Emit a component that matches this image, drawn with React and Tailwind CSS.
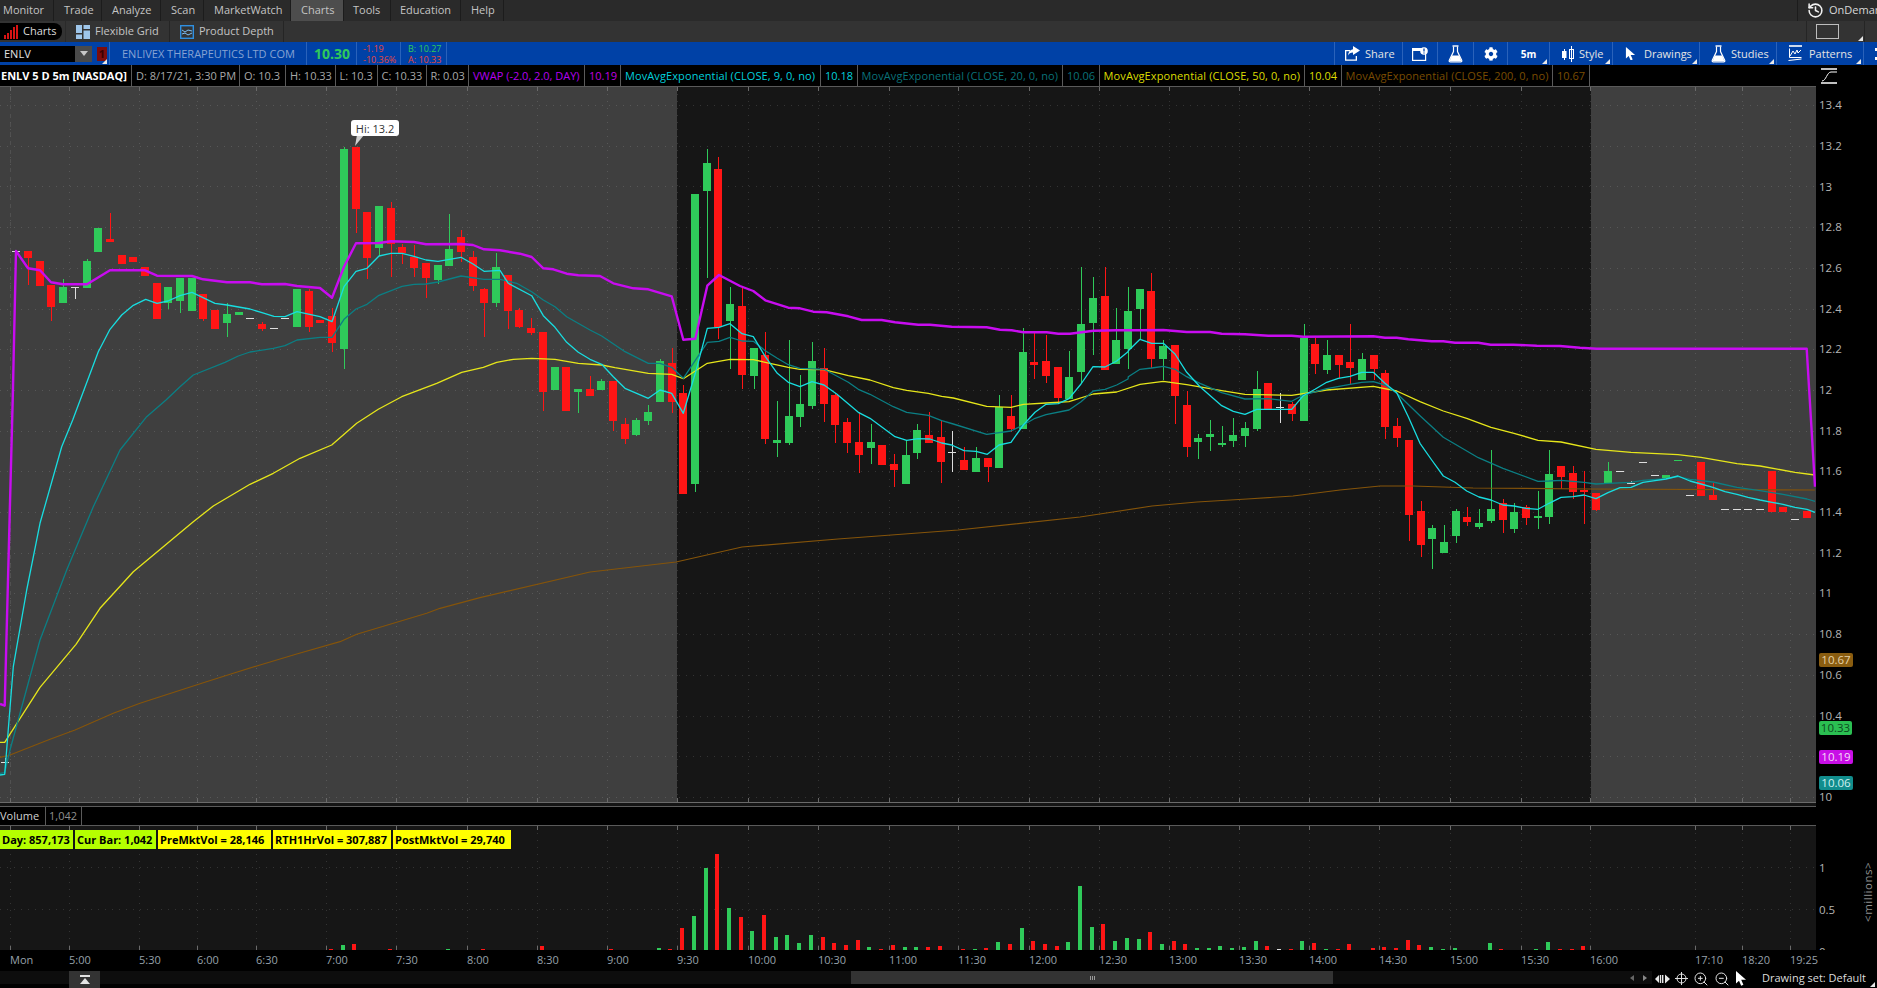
import React from "react";
import { FaCog } from "react-icons/fa";
import { History, ZoomIn, ZoomOut } from "lucide-react";

const G = "#2fca5a", R = "#ff1515", W = "#dddddd";

// candles: [colour, centre, bodyTop, bodyBottom, wickTop, wickBottom] measured on 3x crops
const region = (x0, y0, list) =>
  list.map(([c, cx, bt, bb, wt, wb]) => ({
    c,
    x: x0 + cx / 3,
    bt: y0 + bt / 3,
    bb: y0 + bb / 3,
    wt: wt == null ? null : y0 + wt / 3,
    wb: wb == null ? null : y0 + wb / 3,
  }));

const candles = [
  ...region(0, 400, [[W, 15, 1086, 1088, 1075, 1110]]),
  ...region(0, 120, [
    [W, 48, 393, 395], [R, 84, 393, 413, null, 496], [R, 120, 424, 497], [R, 153, 495, 560, null, 602],
    [G, 189, 501, 548, 478, null], [W, 225, 502, 504, null, 536], [G, 261, 423, 503, 417, null], [G, 294, 324, 396],
    [R, 330, 357, 366, 278, null], [R, 366, 406, 431], [R, 399, 411, 426], [R, 435, 441, 467], [R, 471, 489, 597],
    [G, 504, 501, 548, null, 566], [G, 540, 474, 543, null, 578], [G, 576, 474, 573], [R, 609, 522, 597, null, 602],
    [R, 645, 570, 627], [G, 681, 582, 609, 548, 650], [G, 717, 576, 585], [W, 750, 594, 596], [R, 786, 612, 627, 606, 632],
    [W, 822, 624, 626], [W, 855, 594, 596], [G, 891, 507, 621], [R, 927, 513, 621, 507, 637], [R, 960, 600, 609],
    [R, 996, 588, 669, 564, 695], [G, 1032, 87, 687, 81, 748], [R, 1068, 81, 267, null, 338], [R, 1101, 276, 413, null, 478],
    [G, 1137, 258, 384, null, 408], [R, 1173, 264, 372, 246, 472], [R, 1206, 381, 399, 372, 432], [R, 1242, 411, 444, 375, 472],
    [R, 1278, 429, 474, null, 535], [G, 1314, 435, 480, null, 492], [G, 1347, 387, 438, 283, null], [R, 1383, 351, 396, 331, 425],
    [R, 1419, 411, 498, 394, 514], [R, 1452, 507, 549, 503, 650], [G, 1488, 441, 549, 400, 560],
  ]),
  ...region(300, 120, [
    [R, 624, 465, 573, null, 626], [R, 657, 570, 621, 565, 625], [R, 693, 624, 639, 595, 645], [R, 729, 636, 816, null, 872],
    [G, 765, 741, 810], [R, 798, 741, 873], [G, 834, 807, 816, null, 878], [R, 870, 807, 828, 767, null], [G, 903, 783, 810, 777, null],
    [R, 939, 783, 903, null, 932], [R, 975, 912, 957, 895, 972], [G, 1008, 900, 945, 895, 948], [G, 1044, 876, 903, 856, 914],
    [G, 1080, 723, 846, 717, null], [R, 1116, 729, 846, 685, 878], [R, 1149, 819, 1122, 796, null], [G, 1185, 222, 1092, null, 1115],
  ]),
  ...region(640, 120, [
    [G, 201, 129, 212, 87, 473], [R, 234, 147, 622, 111, 656], [G, 270, 552, 603, 501, 748], [R, 306, 558, 765, 502, 808],
    [G, 342, 684, 768, null, 808], [R, 375, 705, 957, 637, 973], [G, 411, 960, 969, 844, 1010], [G, 447, 888, 969, 660, 974],
    [G, 480, 852, 891, 766, 920], [G, 516, 723, 858, 667, 868], [R, 552, 744, 852, 685, 907], [R, 585, 825, 915, 820, 968],
    [R, 621, 906, 969, 895, 998], [R, 657, 966, 1005, 876, 1060], [G, 693, 966, 984, 913, 1031], [R, 726, 975, 1035],
    [R, 762, 1032, 1050, 1003, 1102], [G, 798, 1005, 1092, 960, null], [G, 831, 930, 999, 913, 1016], [R, 867, 945, 969, 877, null],
    [R, 903, 951, 1026, 902, 1090], [W, 935, 996, 998, 932, 1055], [R, 972, 1020, 1050, 980, null], [G, 1008, 1014, 1056, 980, null],
    [R, 1044, 1014, 1041, null, 1085], [G, 1077, 861, 1044, 826, null], [R, 1113, 888, 927, 826, 936], [G, 1149, 696, 927, 625, null],
    [R, 1182, 726, 735, 640, 778], [R, 1218, 723, 768, 644, 790], [R, 1254, 741, 834, null, 850], [G, 1287, 771, 837, 694, null],
    [G, 1323, 612, 756, 442, 790], [G, 1359, 534, 609, 472, 706], [R, 1395, 528, 750, 442, null], [G, 1428, 660, 732, 565, null],
    [G, 1464, 573, 687, 502, 748],
  ]),
  ...region(1080, 250, [
    [G, 180, 117, 177, null, 268], [R, 213, 123, 327, 70, 353], [G, 249, 288, 327, 270, 390], [R, 285, 285, 438, null, 523],
    [R, 321, 465, 591, 424, 620], [G, 354, 564, 576, 552, 626], [G, 390, 552, 561, 510, 602], [G, 426, 579, 585, 528, 590],
    [G, 459, 555, 573, 505, 590], [G, 495, 534, 558, 516, 590], [G, 531, 417, 537, 364, 542], [R, 564, 399, 477],
    [W, 600, 471, 473, 430, 518], [R, 636, 462, 492, 455, 512], [G, 672, 264, 513, 222, null], [R, 705, 282, 342, 264, 372],
    [G, 741, 315, 360, 270, 372], [R, 777, 315, 345, null, 385], [R, 810, 336, 354, 222, 405], [G, 846, 327, 390, 310, null],
    [R, 882, 315, 357, null, 390], [R, 915, 369, 531, 360, 566], [R, 951, 528, 564, 505, 590], [R, 987, 570, 795, null, 872],
    [R, 1023, 783, 885, 754, 920], [G, 1056, 834, 867, 826, 956], [G, 1092, 876, 909, 826, null], [G, 1128, 783, 858, 777, 878],
    [R, 1161, 801, 816, 771, 828], [G, 1197, 819, 831, 778, 837], [G, 1233, 777, 813, 600, 820], [R, 1269, 759, 810, 748, 848],
    [G, 1302, 786, 837, 760, 848], [R, 1338, 771, 804, 766, 826], [G, 1374, 798, 804, 724, 836], [G, 1407, 672, 801, 600, 822],
    [R, 1443, 648, 681, null, 718], [R, 1479, 669, 726, 648, 748],
  ]),
  ...region(1500, 300, [
    [R, 252, 570, 576, 514, 672], [R, 288, 579, 630, null, 634], [G, 324, 513, 550, 486, null], [W, 360, 513, 515], [W, 393, 548, 550, 543, null],
    [W, 429, 486, 488], [W, 465, 525, 527], [G, 498, 525, 534], [G, 534, 480, 482], [W, 570, 585, 587], [R, 603, 486, 588],
    [R, 639, 585, 600, 548, null], [W, 675, 627, 629], [W, 711, 627, 629], [W, 744, 627, 629], [W, 780, 627, 629], [R, 816, 513, 636],
    [R, 849, 621, 636], [W, 885, 657, 659], [R, 921, 633, 654],
  ]),
];

const seg = (x0, y0, pts) => pts.map(([x, y]) => [x0 + x / 3, y0 + y / 3]);
const chain = (...parts) => {
  let last = -1;
  const out = [];
  parts.flat().forEach(([x, y]) => {
    if (x > last) {
      out.push(`${x.toFixed(1)},${y.toFixed(1)}`);
      last = x;
    }
  });
  return out.join(" ");
};

const vwap = chain(
  seg(0, 400, [[0, 912], [14, 917], [38, 0]]),
  seg(0, 120, [[48, 393], [84, 445], [120, 451], [153, 487], [189, 493], [261, 493], [330, 451], [435, 451], [471, 467], [576, 468], [609, 478], [681, 487], [750, 487], [786, 493], [855, 492], [891, 498], [960, 504], [996, 533], [1032, 440], [1068, 370], [1137, 369], [1173, 364], [1242, 366], [1278, 373], [1383, 372], [1419, 375], [1452, 388], [1500, 391]]),
  seg(300, 120, [[518, 376], [555, 389], [590, 391], [660, 401], [695, 411], [730, 445], [760, 448], [800, 461], [835, 466], [900, 468], [940, 490], [1000, 505], [1045, 508], [1115, 529], [1150, 659], [1185, 656]]),
  seg(640, 120, [[166, 656], [202, 497], [237, 465], [300, 498], [340, 513], [376, 541], [445, 563], [480, 565], [520, 575], [560, 577], [625, 589], [665, 600], [725, 600], [765, 607], [835, 614], [870, 614], [935, 620], [1040, 622], [1080, 629], [1115, 631], [1150, 637], [1220, 637], [1255, 641], [1290, 641], [1360, 632], [1430, 631], [1500, 631]]),
  seg(1080, 250, [[70, 241], [250, 240], [320, 246], [390, 246], [425, 251], [495, 253], [565, 257], [635, 257], [670, 260], [880, 259], [915, 263], [950, 263], [985, 268], [1055, 274], [1090, 274], [1125, 278], [1195, 278], [1232, 284], [1300, 284], [1370, 287], [1440, 288], [1500, 293]]),
  seg(1500, 300, [[40, 132], [110, 136], [180, 138], [220, 142], [290, 146], [920, 146], [945, 560]])
);

const ema9 = chain(
  seg(0, 400, [[0, 1125], [14, 1123], [40, 800], [80, 570], [120, 370], [185, 140]]),
  seg(0, 120, [[218, 900], [295, 695], [330, 628], [365, 585], [400, 556], [437, 538], [471, 550], [504, 543], [540, 527], [576, 517], [609, 533], [645, 550], [681, 555], [750, 567], [786, 578], [822, 589], [855, 590], [891, 575], [960, 590], [996, 605], [1032, 500], [1068, 454], [1101, 445], [1137, 408], [1173, 400], [1206, 400], [1242, 409], [1278, 420], [1314, 424], [1383, 412], [1419, 432], [1452, 454], [1500, 451]]),
  seg(300, 120, [[625, 490], [695, 527], [730, 587], [765, 622], [800, 667], [835, 697], [870, 718], [905, 733], [940, 770], [975, 805], [1010, 820], [1045, 835], [1080, 810], [1115, 820], [1150, 880]]),
  seg(640, 120, [[166, 760], [202, 625], [237, 622], [270, 611], [306, 641], [340, 650], [376, 710], [412, 760], [445, 787], [480, 800], [516, 785], [552, 795], [590, 822], [655, 877], [690, 895], [765, 950], [800, 961], [835, 956], [870, 957], [905, 969], [935, 975], [972, 992], [1008, 994], [1042, 1003], [1077, 975], [1113, 967], [1150, 915], [1185, 877], [1218, 853], [1255, 851], [1287, 836], [1323, 792], [1359, 740], [1395, 741], [1430, 723], [1464, 695]]),
  seg(1080, 250, [[0, 407], [38, 349], [75, 352], [110, 330], [145, 302], [180, 268], [215, 280], [250, 280], [285, 312], [320, 367], [360, 410], [425, 467], [460, 484], [495, 493], [530, 478], [635, 478], [670, 437], [705, 418], [740, 397], [775, 385], [810, 379], [845, 367], [880, 367], [915, 400], [950, 428], [985, 500], [1020, 580], [1055, 630], [1090, 678], [1125, 697], [1160, 723], [1197, 741], [1233, 750], [1269, 765], [1302, 768], [1338, 775], [1374, 778], [1407, 760], [1443, 742], [1479, 740]]),
  seg(1500, 300, [[0, 612], [40, 618], [78, 625], [114, 628], [147, 610], [183, 592], [219, 587], [252, 585], [288, 596], [324, 578], [360, 563], [393, 562], [429, 547], [465, 542], [498, 537], [534, 528], [570, 543], [603, 552], [639, 562], [675, 575], [711, 583], [744, 592], [780, 600], [816, 607], [849, 613], [885, 622], [921, 628], [945, 637]])
);

const ema20 = chain(
  seg(0, 400, [[0, 1120], [14, 1118], [30, 1050], [120, 720], [200, 510], [280, 320], [360, 150], [440, 50], [498, 0]]),
  seg(0, 120, [[540, 800], [580, 765], [675, 727], [715, 708], [750, 696], [820, 685], [855, 677], [891, 660], [960, 652], [996, 652], [1032, 598], [1068, 567], [1101, 553], [1137, 526], [1206, 499], [1242, 493], [1278, 492], [1314, 486], [1383, 468], [1452, 478], [1500, 478]]),
  seg(300, 120, [[650, 490], [695, 515], [730, 540], [765, 560], [800, 590], [870, 630], [905, 648], [975, 695], [1045, 730], [1080, 730], [1115, 742], [1150, 775]]),
  seg(640, 120, [[202, 667], [237, 664], [270, 652], [306, 663], [340, 664], [376, 692], [412, 715], [445, 734], [480, 745], [552, 748], [590, 768], [625, 787], [655, 808], [690, 823], [760, 860], [800, 877], [865, 886], [905, 902], [940, 912], [1040, 943], [1113, 933], [1150, 915], [1185, 895], [1218, 884], [1287, 870], [1323, 845], [1360, 813], [1395, 808], [1430, 795], [1464, 777]]),
  seg(1080, 250, [[0, 458], [38, 425], [75, 418], [110, 403], [145, 380], [180, 358], [215, 354], [250, 349], [285, 358], [320, 380], [360, 400], [425, 428], [495, 447], [565, 446], [635, 454], [670, 435], [740, 416], [810, 403], [845, 397], [880, 395], [915, 405], [950, 430], [1020, 497], [1090, 562], [1195, 623], [1269, 655], [1374, 694], [1407, 693]]),
  seg(1500, 300, [[0, 503], [40, 520], [110, 545], [183, 541], [252, 547], [288, 552], [324, 550], [393, 547], [429, 541], [498, 536], [534, 530], [570, 538], [639, 546], [711, 562], [780, 572], [849, 583], [921, 597], [945, 604]])
);

const ema50 = chain(
  seg(0, 400, [[0, 1027], [14, 1027], [120, 862], [228, 733], [300, 625], [400, 515], [580, 365], [640, 318], [750, 253], [820, 220]]),
  seg(300, 120, [[0, 1015], [95, 975], [170, 910], [235, 868], [305, 830], [410, 790], [485, 757], [550, 742], [590, 727], [640, 718], [695, 715], [765, 718], [835, 730], [905, 735], [945, 743], [1045, 760], [1115, 763], [1150, 776]]),
  seg(640, 120, [[202, 730], [270, 718], [340, 719], [376, 727], [445, 742], [480, 748], [552, 749], [625, 767], [690, 780], [760, 803], [800, 811], [865, 820], [905, 829], [940, 834], [1040, 859], [1113, 862], [1150, 853], [1218, 849], [1287, 845], [1360, 822], [1430, 816]]),
  seg(1080, 250, [[0, 445], [38, 432], [75, 429], [110, 423], [180, 403], [250, 394], [320, 404], [425, 422], [495, 433], [635, 436], [740, 420], [880, 409], [950, 423], [1020, 455], [1090, 483], [1160, 505], [1233, 532], [1302, 550], [1374, 571], [1443, 576]]),
  seg(1500, 300, [[0, 390], [110, 421], [183, 427], [288, 448], [324, 451], [393, 457], [534, 464], [603, 472], [711, 491], [780, 498], [885, 517], [945, 525]])
);

const ema200 = chain(
  seg(0, 400, [[0, 1072], [30, 1065], [150, 1018], [225, 990], [340, 940], [420, 910], [610, 848], [700, 820], [780, 795], [890, 762], [1020, 725], [1070, 703], [1280, 640], [1320, 625], [1440, 593]]),
  [[590, 572], [676, 562], [742, 547], [838, 539], [958, 530], [1080, 517], [1113, 512], [1152, 506], [1197, 502], [1247, 499], [1293, 496], [1340, 490], [1380, 486], [1413, 486], [1473, 488], [1590, 489], [1815, 490]]
);

const ticks = [10, 69, 139, 197, 256, 326, 396, 467, 537, 607, 677, 748, 818, 889, 958, 1029, 1099, 1169, 1239, 1309, 1379, 1450, 1521, 1590, 1695, 1742, 1790];
const priceY = (p) => 105 + (13.4 - p) * 203.5;
const prices = ["13.4", "13.2", "13", "12.8", "12.6", "12.4", "12.2", "12", "11.8", "11.6", "11.4", "11.2", "11", "10.8", "10.6", "10.4", "10.2", "10"];

// volume bars: [x, height, colour]
const vol = [
  ...[[810, 1, R], [840, 5, G], [867, 6, R], [955, 1, R], [1097, 1, G], [1183, 1, R], [1328, 4, R], [1498, 1, R]].map(([x, h, c]) => [x / 2.45, h, c]),
  ...[[46, 2, G], [73, 1, R], [102, 22, R], [132, 34, G], [162, 82, G], [189, 96, R], [218, 42, G], [247, 33, R], [274, 19, G], [304, 35, R], [333, 13, G], [360, 15, G], [389, 7, G], [419, 15, G], [448, 13, R], [475, 7, R], [505, 5, R], [534, 10, R], [561, 3, G], [590, 1, R], [620, 5, R], [649, 3, G], [676, 3, G], [706, 3, R], [735, 4, R], [791, 1, R], [821, 1, G], [848, 2, R], [877, 8, G], [907, 6, R], [936, 22, G], [963, 9, R], [992, 6, R], [1022, 4, R], [1049, 8, G], [1078, 64, G], [1107, 23, G], [1134, 26, R], [1164, 9, G], [1193, 12, G], [1222, 11, G], [1250, 18, R], [1279, 6, G], [1308, 9, R], [1335, 6, R], [1365, 2, G], [1394, 2, G], [1421, 4, G], [1450, 2, G], [1480, 3, G], [1509, 9, G], [1536, 4, R], [1565, 1, W]].map(([x, h, c]) => [640 + x / 2.45, h, c]),
  ...[[10, 3, G], [39, 9, G], [67, 4, R], [96, 1, W], [125, 1, R], [153, 9, G], [182, 7, R], [212, 1, G], [240, 1, R], [268, 6, R], [327, 2, R], [355, 3, R], [384, 2, R], [413, 10, R], [441, 5, R], [470, 3, G], [500, 1, G], [529, 2, G], [615, 7, G], [642, 1, R], [729, 1, G], [758, 8, G], [788, 1, R], [817, 1, R], [844, 4, R]].map(([x, h, c]) => [1240 + x / 2.46, h, c]),
];

const Corner = () => (
  <svg width="5" height="5" viewBox="0 0 5 5" className="absolute right-[2px] bottom-[1px]">
    <path d="M5 0V5H0z" fill="#e8e8e8" />
  </svg>
);

const MainChart = () => (
  <svg viewBox="0 87 1816 715" className="block w-[1816px] h-[715px]">
    <rect x="0" y="87" width="1816" height="715" fill="#3f3f3f" />
    <rect x="677" y="87" width="914" height="715" fill="#161616" />
    <g stroke="#ffffff" strokeOpacity="0.13" strokeDasharray="1 6">
      {prices.map((p) => (
        <line key={p} x1="0" x2="1816" y1={Math.round(priceY(+p)) + 0.5} y2={Math.round(priceY(+p)) + 0.5} />
      ))}
      {ticks.map((x) => (
        <line key={x} x1={x + 0.5} x2={x + 0.5} y1="87" y2="802" />
      ))}
    </g>
    <line x1="10.5" x2="10.5" y1="87" y2="802" stroke="#505050" strokeDasharray="4 5" />
    <g stroke="#6a6a6a" shapeRendering="crispEdges">
      {ticks.map((x) => (
        <g key={x}>
          <line x1={x + 0.5} x2={x + 0.5} y1="87" y2="91" />
          <line x1={x + 0.5} x2={x + 0.5} y1="798" y2="802" />
        </g>
      ))}
    </g>
    <g shapeRendering="crispEdges">
      {candles.map((k, i) => {
        const x = Math.round(k.x);
        const top = Math.round(k.bt);
        const h = Math.max(1, Math.round(k.bb) - top);
        const wt = Math.round(k.wt != null ? k.wt : k.bt);
        const wb = Math.round(k.wb != null ? k.wb : k.bb);
        return (
          <g key={i} fill={k.c}>
            {(k.wt != null || k.wb != null) && <rect x={x} width="1" y={wt} height={wb - wt} />}
            <rect x={x - 4} width="8" y={top} height={h} />
          </g>
        );
      })}
    </g>
    <g fill="none" strokeLinejoin="round">
      <polyline points={ema200} stroke="#85540a" strokeWidth="1.2" />
      <polyline points={ema50} stroke="#e6e61a" strokeWidth="1.3" />
      <polyline points={ema20} stroke="#0b7f84" strokeWidth="1.3" />
      <polyline points={ema9} stroke="#18dde0" strokeWidth="1.3" />
      <polyline points={vwap} stroke="#c80cf0" strokeWidth="2.4" />
    </g>
    <path d="M357 135L355 146L364 135z" fill="#cfcfcf" />
  </svg>
);

const VolumeChart = () => (
  <svg viewBox="0 826 1816 124" className="block w-[1816px] h-[124px]">
    <rect x="0" y="826" width="1816" height="124" fill="#161616" />
    <g stroke="#ffffff" strokeOpacity="0.13" strokeDasharray="1 6">
      {[867.5, 909.5].map((y) => (
        <line key={y} x1="0" x2="1816" y1={y} y2={y} />
      ))}
      {ticks.map((x) => (
        <line key={x} x1={x + 0.5} x2={x + 0.5} y1="826" y2="950" />
      ))}
    </g>
    <g stroke="#6a6a6a" shapeRendering="crispEdges">
      {ticks.map((x) => (
        <g key={x}>
          <line x1={x + 0.5} x2={x + 0.5} y1="826" y2="830" />
          <line x1={x + 0.5} x2={x + 0.5} y1="946" y2="950" />
        </g>
      ))}
    </g>
    <g shapeRendering="crispEdges">
      {vol.map(([x, h, c], i) => (
        <rect key={i} x={Math.round(x) - 2} width="4" y={950 - h} height={h} fill={c} />
      ))}
    </g>
  </svg>
);

const menu = [["Monitor", 54, false, "pl-[3px]"], ["Trade", 48, false, "pl-[10px]"], ["Analyze", 59, false, "pl-[10px]"], ["Scan", 43, false, "pl-[10px]"], ["MarketWatch", 87, false, "pl-[10px]"], ["Charts", 53, true, "pl-[10px]"], ["Tools", 47, false, "pl-[9px]"], ["Education", 70, false, "pl-[9px]"], ["Help", 43, false, "pl-[10px]"]];

const studyCells = [
  ["ENLV 5 D 5m [NASDAQ]", 132, "text-white font-bold pl-[1px]"],
  ["D: 8/17/21, 3:30 PM", 108, "text-[#a8a8a8] pl-[4px]"],
  ["O: 10.3", 46, "text-[#a8a8a8] pl-[4px]"],
  ["H: 10.33", 49.5, "text-[#a8a8a8] pl-[4px]"],
  ["L: 10.3", 42, "text-[#a8a8a8] pl-[4px]"],
  ["C: 10.33", 49, "text-[#a8a8a8] pl-[4px]"],
  ["R: 0.03", 42.5, "text-[#a8a8a8] pl-[4px]"],
  ["VWAP (-2.0, 2.0, DAY)", 116, "text-[#b400f0] pl-[4px]"],
  ["10.19", 36, "text-[#c000e0] pl-[4px]"],
  ["MovAvgExponential (CLOSE, 9, 0, no)", 200, "text-[#00cfdc] pl-[4px] tracking-[0.1px]"],
  ["10.18", 36.5, "text-[#00cfdc] pl-[4px]"],
  ["MovAvgExponential (CLOSE, 20, 0, no)", 205.5, "text-[#0a7178] pl-[4px] tracking-[0.1px]"],
  ["10.06", 36.6, "text-[#0a7178] pl-[4px]"],
  ["MovAvgExponential (CLOSE, 50, 0, no)", 205.4, "text-[#dcdc00] pl-[4px] tracking-[0.1px]"],
  ["10.04", 36.6, "text-[#dcdc00] pl-[4px]"],
  ["MovAvgExponential (CLOSE, 200, 0, no)", 211.4, "text-[#7a4c00] pl-[4px] tracking-[0.1px]"],
  ["10.67", 37, "text-[#7a4c00] pl-[4px]"],
];

const stats = [
  ["Day: 857,173", 73, "bg-[#b5ff00]"],
  ["Cur Bar: 1,042", 81, "bg-[#b5ff00]"],
  ["PreMktVol = 28,146", 113, "bg-[#ffff00]"],
  ["RTH1HrVol = 307,887", 118, "bg-[#ffff00]"],
  ["PostMktVol = 29,740", 118, "bg-[#ffff00]"],
];

const times = [["Mon", 10], ["5:00", 69], ["5:30", 139], ["6:00", 197], ["6:30", 256], ["7:00", 326], ["7:30", 396], ["8:00", 467], ["8:30", 537], ["9:00", 607], ["9:30", 677], ["10:00", 748], ["10:30", 818], ["11:00", 889], ["11:30", 958], ["12:00", 1029], ["12:30", 1099], ["13:00", 1169], ["13:30", 1239], ["14:00", 1309], ["14:30", 1379], ["15:00", 1450], ["15:30", 1521], ["16:00", 1590], ["17:10", 1695], ["18:20", 1742], ["19:25", 1790]];

const Flask = () => (
  <svg width="15" height="18" viewBox="0 0 15 18" fill="none">
    <path d="M4.5 1h6" stroke="#fff" strokeWidth="1.4" />
    <path d="M5.5 1.5v5L1.3 15.2c-.4.9.1 1.6 1 1.6h10.4c.9 0 1.4-.7 1-1.6L9.5 6.5v-5" stroke="#fff" strokeWidth="1.2" />
    <path d="M3.8 10.5h7.4l2.2 5.6H1.6z" fill="#fff" />
  </svg>
);

const Cursor = ({ size = 15 }) => (
  <svg width={size} height={size * 1.25} viewBox="0 0 12 15">
    <path d="M1 0v12.5l3-2.8 2.2 5 2.2-1-2.2-4.9H11z" fill="#fff" />
  </svg>
);

const BlueSep = "border-r border-[#2a62ba]";

const App = () => (
  <div className="w-[1877px] h-[988px] overflow-hidden bg-black flex flex-col text-[11px] leading-none font-['Open_Sans',sans-serif] text-[#c4c4c4]">
    {/* menu bar */}
    <div className="h-[21px] bg-[#2a2a2a] flex shrink-0 items-stretch">
      {menu.map(([t, w, on, pad]) => (
        <div key={t} style={{ width: w }} className={`flex items-center pb-[2px] border-r border-[#1c1c1c] ${pad} ${on ? "bg-[#4d4d4d]" : ""}`}>
          {t}
        </div>
      ))}
      <div className="ml-auto w-[80px] border-l border-[#1c1c1c] flex items-center overflow-hidden pl-[9px] gap-[5px] whitespace-nowrap text-[#d8d8d8]">
        <History size={17} strokeWidth={2.2} color="#f0f0f0" className="shrink-0" />
        <span className="pb-[2px]">OnDemand</span>
      </div>
    </div>

    {/* second toolbar */}
    <div className="h-[21px] bg-[#333333] flex shrink-0 items-center">
      <div className="w-[62px] h-[17px] bg-black rounded-r-[8px] flex items-center pl-[4px] gap-[5px] text-[#dcdcdc]">
        <svg width="14" height="14" viewBox="0 0 14 14" fill="#d81414">
          <rect x="0" y="10" width="2" height="4" /><rect x="3" y="8" width="2" height="6" /><rect x="6" y="5" width="2" height="9" /><rect x="9" y="2" width="2" height="12" /><rect x="12" y="0" width="2" height="14" />
        </svg>
        <span className="pb-[2px]">Charts</span>
      </div>
      <div className="w-[105px] h-full flex items-center pl-[10px] gap-[5px] border-r border-[#252525] border-l border-l-[#2a2a2a] ml-[3px]">
        <svg width="14" height="14" viewBox="0 0 14 14" fill="#9ec6ea">
          <rect x="0" y="0" width="6" height="8" /><rect x="7.5" y="0" width="6.5" height="4" /><rect x="7.5" y="5.5" width="6.5" height="8.5" /><rect x="0" y="9.5" width="6" height="4.5" />
        </svg>
        <span className="pb-[2px]">Flexible Grid</span>
      </div>
      <div className="w-[114px] h-full flex items-center pl-[10px] gap-[5px] border-r border-[#252525]">
        <svg width="14" height="14" viewBox="0 0 14 14" fill="none">
          <rect x="0.7" y="0.7" width="12.6" height="12.6" stroke="#2f8fe0" strokeWidth="1.4" />
          <path d="M2 5l3 2 3-2 4 1M2 9l3-1 3 2 4-2" stroke="#7fc0f5" strokeWidth="1" />
        </svg>
        <span className="pb-[2px]">Product Depth</span>
      </div>
      <div className="ml-auto h-full w-[71px] border-l border-[#252525] flex items-center pl-[9px] relative">
        <div className="w-[23px] h-[15px] border border-[#bdbdbd]" />
        <div className="absolute right-[12px] top-0 h-full border-r border-[#252525]" />
        <svg width="5" height="5" viewBox="0 0 5 5" className="absolute right-[14px] bottom-[1px]">
          <path d="M5 0V5H0z" fill="#e8e8e8" />
        </svg>
      </div>
    </div>

    {/* symbol bar */}
    <div className="h-[23px] bg-[#0041a6] flex shrink-0 items-stretch text-[#ffffff]">
      <div className={`w-[110px] relative flex items-center ${BlueSep}`}>
        <div className="w-[92px] h-[16px] bg-black flex items-center pl-[4px] justify-between text-[#e0e0e0]">
          ENLV
          <div className="w-[17px] h-[16px] bg-[#4a4a4a] flex items-center justify-center">
            <svg width="8" height="5" viewBox="0 0 8 5"><path d="M0 0h8L4 5z" fill="#c8c8c8" /></svg>
          </div>
        </div>
        <div className="ml-[5px] w-[10px] h-[14px] bg-[#7c0d0d] text-[#3a0000] flex items-center justify-center font-bold">1</div>
        <Corner />
      </div>
      <div className={`w-[197px] flex items-center pl-[12px] text-[#86a3d3] ${BlueSep}`}>ENLIVEX THERAPEUTICS LTD COM</div>
      <div className={`w-[50px] flex items-center pl-[7px] text-[14px] font-bold text-[#2fca5a] ${BlueSep}`}>10.30</div>
      <div className={`w-[44px] flex flex-col justify-center pl-[6px] gap-[2px] text-[9px] text-[#e8463c] ${BlueSep}`}>
        <span>-1.19</span>
        <span>-10.36%</span>
      </div>
      <div className={`w-[46px] flex flex-col justify-center pl-[7px] gap-[2px] text-[9px] ${BlueSep}`}>
        <span className="text-[#2fca5a]">B: 10.27</span>
        <span className="text-[#e8463c]">A: 10.33</span>
      </div>
      <div className={`flex-1 ${BlueSep}`} />
      <div className={`w-[68px] flex items-center pl-[9px] gap-[5px] text-[#e4e4e4] ${BlueSep}`}>
        <svg width="16" height="15" viewBox="0 0 16 15" fill="#fff">
          <path d="M1 4h5v1.3H2.3v8.2h9.4V10H13v4.8H1z" />
          <path d="M9 0l7 4.5L9 9V6.5c-2.5 0-4 1-5 3 .2-3.5 2-5.8 5-6.3z" />
        </svg>
        Share
      </div>
      <div className={`w-[35px] flex items-center justify-center ${BlueSep}`}>
        <svg width="16" height="14" viewBox="0 0 16 14" fill="none">
          <rect x="0.6" y="1.6" width="13" height="11.8" stroke="#fff" strokeWidth="1.2" />
          <rect x="0.6" y="1.6" width="9" height="2.4" fill="#fff" />
          <circle cx="12" cy="4" r="3.8" fill="#fff" />
          <path d="M12 1.6v3M12 5.6v1" stroke="#0041a6" strokeWidth="1.3" />
        </svg>
      </div>
      <div className={`w-[36px] flex items-center justify-center ${BlueSep}`}><Flask /></div>
      <div className={`w-[34px] flex items-center justify-center ${BlueSep}`}><FaCog size={14} color="#fff" /></div>
      <div className={`w-[42px] relative flex items-center justify-center font-bold text-[10px] ${BlueSep}`}>5m<Corner /></div>
      <div className={`w-[63px] relative flex items-center pl-[12px] gap-[5px] text-[#e4e4e4] ${BlueSep}`}>
        <svg width="12" height="16" viewBox="0 0 12 16" fill="#fff">
          <rect x="0" y="5" width="4.5" height="7" /><rect x="2" y="3" width="1" height="11" />
          <rect x="7.5" y="3.5" width="4" height="9" fill="none" stroke="#fff" /><rect x="9" y="0" width="1" height="16" />
        </svg>
        Style<Corner />
      </div>
      <div className={`w-[87px] relative flex items-center pl-[12px] gap-[8px] text-[#e4e4e4] ${BlueSep}`}>
        <Cursor size={11} />Drawings<Corner />
      </div>
      <div className={`w-[77px] relative flex items-center pl-[11px] gap-[5px] text-[#e4e4e4] ${BlueSep}`}>
        <Flask />Studies<Corner />
      </div>
      <div className={`w-[87px] relative flex items-center pl-[11px] gap-[6px] text-[#e4e4e4] ${BlueSep}`}>
        <svg width="15" height="17" viewBox="0 0 15 17" fill="none" stroke="#fff">
          <path d="M1 1h13" strokeWidth="1.6" />
          <path d="M1.5 3.5v9h12M0.5 15.5l13-1.5" strokeWidth="1" />
          <path d="M2 11l3-5 2 3 2-4 1 3 3-3" strokeWidth="1" />
        </svg>
        Patterns<Corner />
      </div>
      <div className="w-[13px] shrink-0 flex items-center pl-[11px]">
        <div className="w-[2px] h-[12px] border-y-[3px] border-white" />
      </div>
    </div>

    {/* chart block */}
    <div className="flex-1 flex min-h-0">
      <div className="w-[1816px] flex flex-col shrink-0 relative z-10">
        <div className="h-[22px] bg-black border-b border-[#5a5a5a] flex items-stretch shrink-0 whitespace-nowrap">
          {studyCells.map(([t, w, cls], i) => (
            <div key={i} style={{ width: w }} className={`flex items-center border-r border-[#5a5a5a] overflow-hidden ${cls}`}>
              {t}
            </div>
          ))}
        </div>
        <div className="relative h-[715px] shrink-0">
          <MainChart />
          <div className="absolute left-[351px] top-[33px] w-[48px] h-[16px] bg-white rounded-[3px] text-[#333333] flex items-center justify-center">Hi: 13.2</div>
        </div>
        <div className="h-[4px] shrink-0 bg-[#141414] border-t border-[#6a6a6a]" />
        <div className="h-[20px] shrink-0 bg-black border-y border-[#5a5a5a] flex items-stretch">
          <div className="w-[46px] border-r border-[#5a5a5a] flex items-center pb-[2px] text-[#d0d0d0]">Volume</div>
          <div className="w-[36px] border-r border-[#5a5a5a] flex items-center pb-[2px] pl-[3px] text-[#8f8f8f]">1,042</div>
        </div>
        <div className="relative h-[124px] shrink-0 border-b border-[#6a6a6a]">
          <VolumeChart />
          <div className="absolute left-0 top-[4px] flex gap-[2px] text-black font-bold">
            {stats.map(([t, w, cls]) => (
              <div key={t} style={{ width: w }} className={`h-[19px] flex items-center pl-[2px] whitespace-nowrap ${cls}`}>{t}</div>
            ))}
          </div>
        </div>
        <div className="h-[21px] shrink-0 flex items-center pb-[2px] text-[#97a0aa] text-[11px]">
          {times.map(([t, x], i) => {
            const next = i + 1 < times.length ? times[i + 1][1] : 1816;
            return (
              <div key={t} style={{ width: next - x, marginLeft: i === 0 ? x : 0 }} className="whitespace-nowrap">{t}</div>
            );
          })}
        </div>
      </div>

      {/* price axis */}
      <div className="relative flex-1 bg-black flex flex-col text-[#b4b4b4] text-[11.5px]">
        <div className="h-[19.65px] shrink-0 pl-[5px] pt-[3px]">
          <svg width="16" height="16" viewBox="0 0 16 16" fill="none" stroke="#fff">
            <path d="M0 1h16M0 15h16" strokeWidth="1.6" />
            <path d="M1 13C5 13 6 4 10 4H16" strokeWidth="1" />
          </svg>
        </div>
        {prices.map((p) => (
          <div key={p} className="h-[40.7px] shrink-0 flex items-center pl-[3px]">{p === "10.2" ? "" : p}</div>
        ))}
        <div className="flex-1 min-h-0 overflow-hidden">
          <div className="h-[29.7px]" />
          <div className="h-[42px] flex items-center pl-[3px]">1</div>
          <div className="h-[42px] flex items-center pl-[3px]">0.5</div>
          <div className="h-[42px] flex items-center pl-[3px]">0</div>
        </div>
        <div className="h-[21px] shrink-0 bg-black" />
        <div className="absolute left-[3px] top-[588px] w-[34px] h-[14px] rounded-[2px] bg-[#8a5d10] text-[#e6d2a8] flex items-center justify-center">10.67</div>
        <div className="absolute left-[3px] top-[656px] w-[33px] h-[14px] rounded-[2px] bg-[#2bbf52] text-[#0e4a20] flex items-center justify-center">10.33</div>
        <div className="absolute left-[3px] top-[685px] w-[34px] h-[14px] rounded-[2px] bg-[#c80fe6] text-[#f5dcf8] flex items-center justify-center">10.19</div>
        <div className="absolute left-[3px] top-[711px] w-[34px] h-[14px] rounded-[2px] bg-[#118d8d] text-[#d0f0f0] flex items-center justify-center">10.06</div>
        <div className="absolute right-[4px] top-[797px] [writing-mode:vertical-rl] rotate-180 text-[#8f8f8f] tracking-[0.5px]">&lt;millions&gt;</div>
      </div>
    </div>

    {/* bottom strip */}
    <div className="h-[17px] shrink-0 bg-black flex items-start relative">
      <div className="w-[1652px] h-[13px] bg-[#0d0d0d] flex items-start relative shrink-0">
        <div className="ml-[69px] w-[31px] h-[17px] bg-[#333333] flex items-center justify-center">
          <svg width="10" height="10" viewBox="0 0 10 10" fill="#e4e4e4"><rect x="0" y="0" width="10" height="2" /><path d="M5 3l5 6H0z" /></svg>
        </div>
        <div className="ml-[751px] w-[482px] h-[13px] bg-[#333333] flex items-center justify-center gap-[1px]">
          <span className="w-[1px] h-[4px] bg-[#999]" /><span className="w-[1px] h-[4px] bg-[#999]" /><span className="w-[1px] h-[4px] bg-[#999]" />
        </div>
        <div className="ml-auto mr-[5px] h-[13px] flex items-center gap-[9px]">
          <svg width="4" height="6" viewBox="0 0 4 6"><path d="M4 0v6L0 3z" fill="#666" /></svg>
          <svg width="4" height="6" viewBox="0 0 4 6"><path d="M0 0v6l4-3z" fill="#888" /></svg>
        </div>
      </div>
      <div className="flex items-center h-[15px] gap-[5px] pl-[3px]">
        <svg width="15" height="10" viewBox="0 0 15 10" fill="#e8e8e8"><path d="M0 5l4-4v8z" /><rect x="4.8" y="1" width="1.4" height="8" /><rect x="7" y="1" width="1.4" height="8" /><path d="M15 5l-5-4.5v9z" /></svg>
        <svg width="13" height="13" viewBox="0 0 13 13" fill="none" stroke="#e0e0e0" strokeWidth="1"><circle cx="6.5" cy="6.5" r="4.5" /><path d="M6.5 0v13M0 6.5h13" /></svg>
        <ZoomIn size={16} color="#e4e4e4" strokeWidth={1.5} />
        <ZoomOut size={16} color="#e4e4e4" strokeWidth={1.5} />
        <Cursor size={12} />
      </div>
      <div className="ml-[15px] text-[#dcdcdc] whitespace-nowrap leading-[13px]">Drawing set: Default</div>
      <Corner />
    </div>
  </div>
);

export default App;
